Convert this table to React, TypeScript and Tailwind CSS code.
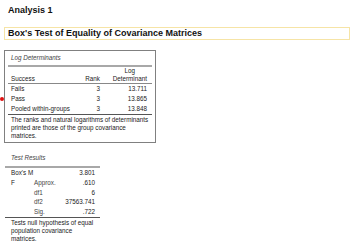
import React from "react";

const logRows = [
  { name: "Fails", rank: "3", det: "13.711", marked: false },
  { name: "Pass", rank: "3", det: "13.865", marked: true },
  { name: "Pooled within-groups", rank: "3", det: "13.848", marked: false },
];

const testRows = [
  { a: "Box's M", b: "", v: "3.801", span: true },
  { a: "F", b: "Approx.", v: ".610", span: false },
  { a: "", b: "df1", v: "6", span: false },
  { a: "", b: "df2", v: "37563.741", span: false },
  { a: "", b: "Sig.", v: ".722", span: false },
];

export default function App() {
  return (
    <div className="w-[350px] h-[250px] overflow-hidden bg-white text-[#222] font-['Liberation_Sans',Arial,sans-serif]">
      <div className="pl-[8px] pt-[5px] text-[9px] font-bold leading-[10px] text-[#111]">
        Analysis 1
      </div>
      <div className="ml-[4px] mt-[12px] h-[13px] border border-[#f6e4a6] pl-[3px] text-[9px] font-bold leading-[11px] text-[#111]">
        Box's Test of Equality of Covariance Matrices
      </div>

      {/* Log Determinants */}
      <div className="ml-[4px] mt-[10px] w-[152px] border border-[#808080] px-[3px] pb-[2px] text-[6.3px]">
        <div className="h-[14px] pl-[3px] pt-[3px] text-[6.3px] italic leading-[7px] text-[#444]">
          Log Determinants
        </div>
        <div className="border-t-2 border-[#a8a8a8]">
          <div className="grid grid-cols-[67px_25px_52px] leading-[8px]">
            <div className="self-end pl-[3px]">Success</div>
            <div className="self-end text-right">Rank</div>
            <div className="flex flex-col items-end pr-[5px]">
              <div className="text-center">
                Log
                <br />
                Determinant
              </div>
            </div>
          </div>
        </div>
        <div className="border-t border-[#888]">
          {logRows.map((r) => (
            <div
              key={r.name}
              className="relative grid h-[10px] grid-cols-[67px_25px_52px] leading-[10px]"
            >
              {r.marked && (
                <div className="absolute left-[-8px] top-[3px] h-[4px] w-[4px] rounded-full bg-[#e01010]" />
              )}
              <div className="pl-[3px]">{r.name}</div>
              <div className="text-right">{r.rank}</div>
              <div className="pr-[5px] text-right">{r.det}</div>
            </div>
          ))}
        </div>
        <div className="border-t border-[#555] pl-[3px] pt-[1px] leading-[8px]">
          The ranks and natural logarithms of determinants
          <br />
          printed are those of the group covariance
          <br />
          matrices.
        </div>
      </div>

      {/* Test Results */}
      <div className="ml-[5px] mt-[11px] w-[95px] text-[6.3px]">
        <div className="h-[12px] pl-[6px] text-[6.3px] italic leading-[8px] text-[#444]">
          Test Results
        </div>
        <div className="border-t-2 border-[#a8a8a8]">
          {testRows.map((r, i) => (
            <div
              key={i}
              className="grid h-[9.8px] grid-cols-[23px_30px_1fr] pl-[6px] leading-[9.8px]"
            >
              {r.span ? (
                <div className="col-span-2">{r.a}</div>
              ) : (
                <>
                  <div>{r.a}</div>
                  <div className="text-[#444]">{r.b}</div>
                </>
              )}
              <div className="pr-[5px] text-right">{r.v}</div>
            </div>
          ))}
        </div>
        <div className="border-t border-[#555] pl-[6px] pt-[1px] leading-[8px]">
          Tests null hypothesis of equal
          <br />
          population covariance
          <br />
          matrices.
        </div>
      </div>
    </div>
  );
}
